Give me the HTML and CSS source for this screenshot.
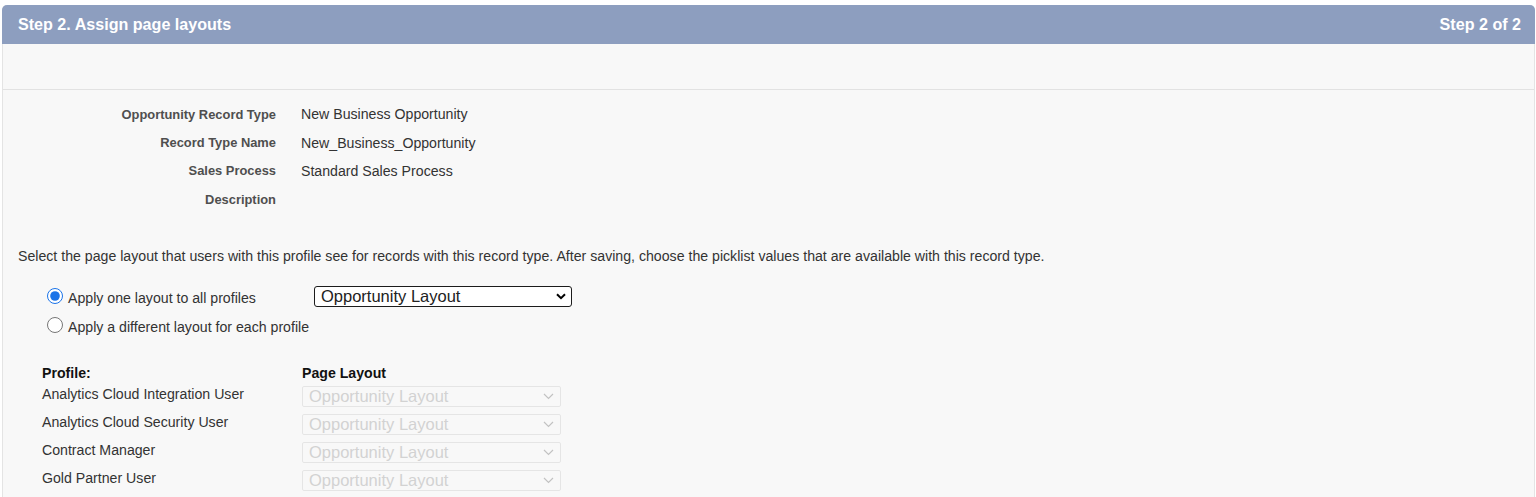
FILE: index.html
```html
<!DOCTYPE html>
<html lang="en">
<head>
<meta charset="utf-8">
<title>Step 2. Assign page layouts</title>
<link rel="stylesheet" href="styles.css">
</head>
<body>
<div class="panel">
  <div class="header">
    <span class="title">Step 2. Assign page layouts</span>
    <span class="step">Step 2 of 2</span>
  </div>
  <div class="spacer"></div>
  <div class="details">
    <div class="label">Opportunity Record Type</div><div class="value">New Business Opportunity</div>
    <div class="label">Record Type Name</div><div class="value">New_Business_Opportunity</div>
    <div class="label">Sales Process</div><div class="value">Standard Sales Process</div>
    <div class="label">Description</div><div class="value"></div>
  </div>
  <p class="intro">Select the page layout that users with this profile see for records with this record type. After saving, choose the picklist values that are available with this record type.</p>
  <div class="options">
    <label class="opt"><input type="radio" name="mode" checked><span>Apply one layout to all profiles</span></label>
    <div class="sel main">
      <select><option>Opportunity Layout</option></select>
      <svg class="chev" width="10" height="7" viewBox="0 0 10 7"><path d="M1 1.2 L5 5.2 L9 1.2" fill="none" stroke="#000" stroke-width="2"/></svg>
    </div>
    <label class="opt"><input type="radio" name="mode"><span>Apply a different layout for each profile</span></label>
  </div>
  <div class="profiles">
    <div class="ph">Profile:</div><div class="ph">Page Layout</div>
    <div class="pname">Analytics Cloud Integration User</div>
    <div class="sel dis"><select disabled><option>Opportunity Layout</option></select><svg class="chev" width="11" height="7" viewBox="0 0 11 7"><path d="M1 1 L5.5 5.5 L10 1" fill="none" stroke="#c2c2c2" stroke-width="1.2"/></svg></div>
    <div class="pname">Analytics Cloud Security User</div>
    <div class="sel dis"><select disabled><option>Opportunity Layout</option></select><svg class="chev" width="11" height="7" viewBox="0 0 11 7"><path d="M1 1 L5.5 5.5 L10 1" fill="none" stroke="#c2c2c2" stroke-width="1.2"/></svg></div>
    <div class="pname">Contract Manager</div>
    <div class="sel dis"><select disabled><option>Opportunity Layout</option></select><svg class="chev" width="11" height="7" viewBox="0 0 11 7"><path d="M1 1 L5.5 5.5 L10 1" fill="none" stroke="#c2c2c2" stroke-width="1.2"/></svg></div>
    <div class="pname">Gold Partner User</div>
    <div class="sel dis"><select disabled><option>Opportunity Layout</option></select><svg class="chev" width="11" height="7" viewBox="0 0 11 7"><path d="M1 1 L5.5 5.5 L10 1" fill="none" stroke="#c2c2c2" stroke-width="1.2"/></svg></div>
  </div>
</div>
</body>
</html>
```

FILE: styles.css
```css
html, body {
  margin: 0;
  padding: 0;
  background: #ffffff;
  font-family: "Liberation Sans", Arial, sans-serif;
  font-size: 14.15px;
  color: #333333;
}
.panel {
  margin: 5px 1px 0 2px;
  background: #f8f8f8;
  border-left: 1px solid #e4e4e4;
  border-right: 1px solid #e4e4e4;
  border-radius: 5px 5px 0 0;
  min-height: 492px;
}
.header {
  height: 39px;
  background: #8d9ebf;
  border-radius: 5px 5px 0 0;
  margin: 0 -1px;
  padding: 0 14px 0 16px;
  display: flex;
  align-items: center;
  justify-content: space-between;
  color: #ffffff;
  font-weight: bold;
  font-size: 16.1px;
}
.spacer {
  height: 45px;
  border-bottom: 1px solid #e2e2e2;
}
.details {
  display: grid;
  grid-template-columns: 273px 1fr;
  column-gap: 25px;
  grid-auto-rows: 28.4px;
  padding-top: 10px;
  align-items: center;
}
.label {
  text-align: right;
  font-weight: bold;
  font-size: 12.9px;
  color: #4f4f4f;
}
.value {
  color: #333333;
}
.intro {
  margin: 33px 0 0 15px;
  line-height: 18px;
  color: #333333;
}
.options {
  display: grid;
  grid-template-columns: 267px 258px;
  grid-template-rows: 29px 29px;
  margin: 17px 0 0 44px;
  align-items: center;
}
.opt {
  display: flex;
  align-items: center;
}
.opt input {
  width: 16px;
  height: 16px;
  margin: 0 5px 0 0;
  accent-color: #1a73e8;
}
.opt span {
  position: relative;
  top: 2px;
}
.sel {
  position: relative;
}
.sel select {
  appearance: none;
  -webkit-appearance: none;
  display: block;
  box-sizing: border-box;
  width: 100%;
  height: 21px;
  margin: 0;
  padding: 0 0 0 6px;
  font-family: "Liberation Sans", Arial, sans-serif;
  font-size: 16.5px;
  line-height: 19px;
  border-radius: 3px;
}
.sel .chev {
  position: absolute;
  right: 6px;
  top: 7px;
  pointer-events: none;
}
.main select {
  border: 1px solid #1c1c1c;
  background: #ffffff;
  color: #222222;
}
.dis {
  width: 259px;
}
.dis select {
  border: 1px solid #dedede;
  background: #f9f9f9;
  color: #c3c3c3;
  border-radius: 2px;
}
.dis .chev {
  right: 7px;
}
.profiles {
  display: grid;
  grid-template-columns: 260px 259px;
  grid-auto-rows: 28px;
  margin: 15px 0 0 39px;
  align-items: center;
}
.profiles .ph {
  font-weight: bold;
  color: #111111;
  align-self: end;
  line-height: 16px;
  margin-bottom: 2px;
}
.pname {
  color: #333333;
  align-self: start;
  margin-top: 3px;
}
```
